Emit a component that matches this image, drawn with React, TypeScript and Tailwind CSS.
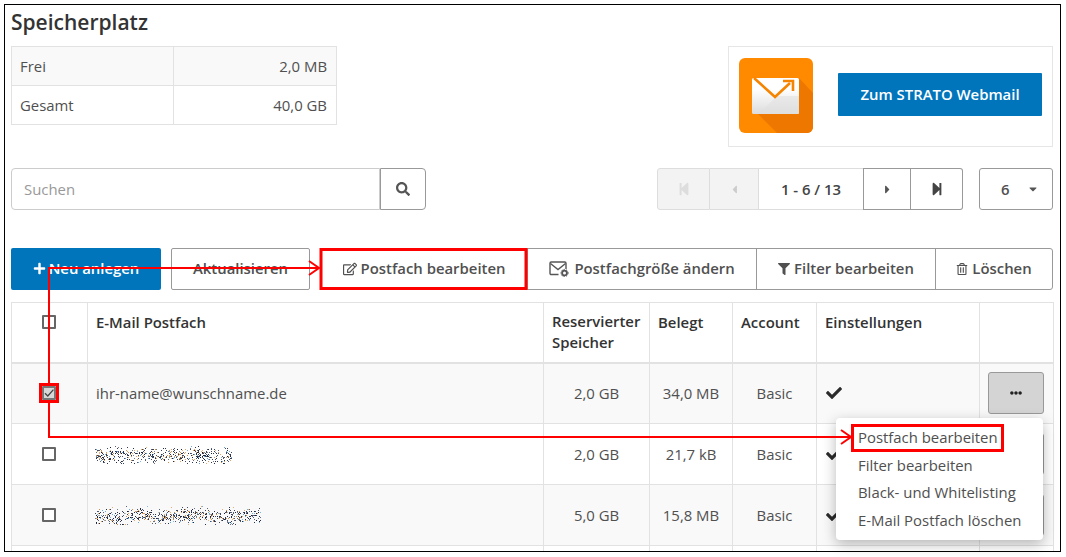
import React from "react";
import { FaSearch, FaRegEdit, FaFilter, FaRegTrashAlt, FaPlus, FaCheck, FaStepBackward, FaStepForward, FaCaretLeft, FaCaretRight, FaCaretDown, FaEllipsisH } from "react-icons/fa";

function Noise({ width, height, seed }: { width: number; height: number; seed: number }) {
  let s = seed;
  const rnd = () => {
    s = (s * 1664525 + 1013904223) % 4294967296;
    return s / 4294967296;
  };
  const colors = ["#141c36", "#1f2740", "#2a3a60", "#141c36", "#d08a3e", "#5fa3d8", "#555b66", "#1f2740", "#e2a25e", "#141c36"];
  const dots: React.ReactNode[] = [];
  const count = Math.round(width * 4.2);
  for (let i = 0; i < count; i++) {
    const x = rnd() * width;
    const spread = (rnd() + rnd() + rnd()) / 3;
    const y = height / 2 + 1 + (spread - 0.5) * height * 1.2 + Math.sin(x / 9) * 1;
    dots.push(<rect key={i} x={Math.round(x)} y={Math.round(y)} width={1} height={1} fill={colors[Math.floor(rnd() * colors.length)]} opacity={0.75 + rnd() * 0.25} />);
  }
  return <svg width={width} height={height} className="-ml-[1px] block">{dots}</svg>;
}

function Check({ checked }: { checked?: boolean }) {
  return (
    <span className={`ml-[30px] flex h-[14px] w-[14px] items-center justify-center rounded-[1px] border-2 ${checked ? "border-[#777] bg-[#d8d8d8]" : "border-[#666] bg-white"}`}>
      {checked && (
        <svg width="10" height="10" viewBox="0 0 10 10"><path d="M1 5.2 L3.8 8 L9.4 1.6" fill="none" stroke="#444" strokeWidth="1.3" /></svg>
      )}
    </span>
  );
}

function MailGear() {
  return (
    <svg width="20" height="16" viewBox="0 0 20 16" className="text-[#555]">
      <path d="M9.5 13.5H2.2a1.2 1.2 0 0 1-1.2-1.2V2.2A1.2 1.2 0 0 1 2.2 1h13.6A1.2 1.2 0 0 1 17 2.2V8" fill="none" stroke="currentColor" strokeWidth="1.4" />
      <path d="M1.5 2.5 9 8.5l7.5-6" fill="none" stroke="currentColor" strokeWidth="1.4" />
      <circle cx="15.5" cy="12" r="2.4" fill="none" stroke="currentColor" strokeWidth="1.8" />
      <circle cx="15.5" cy="12" r="3.6" fill="none" stroke="currentColor" strokeWidth="1" strokeDasharray="1.3 1.3" />
    </svg>
  );
}

function WebmailIcon() {
  return (
    <svg width="74" height="75" viewBox="0 0 74 75" className="block">
      <defs>
        <linearGradient id="env2" x1="0" y1="0" x2="0" y2="1">
          <stop offset="0.3" stopColor="#ffffff" />
          <stop offset="1" stopColor="#dcdcdc" />
        </linearGradient>
      </defs>
      <rect width="74" height="75" rx="6" fill="#ff8a00" />
      <path d="M60 20 L74 35 V69 a6 6 0 0 1-6 6 H38 L17 54 Z" fill="#ee7700" />
      <rect x="13" y="20" width="47" height="36" rx="1.5" fill="url(#env2)" />
      <path d="M20 56 L38 38 L60 38 V56 Z" fill="#e0e0e0" opacity="0.55" />
      <path d="M15 20 L36 39 L51 25" fill="none" stroke="#f58400" strokeWidth="2.6" />
      <path d="M44 23 H54 V33" fill="none" stroke="#f58400" strokeWidth="2.6" />
    </svg>
  );
}

const pageBtn = "flex items-center justify-center h-full";

function Row({ email, mem, used, bg, action, noise, clipped }: { email?: string; mem?: string; used?: string; bg?: string; action?: boolean; noise?: React.ReactNode; clipped?: boolean }) {
  const cell = "border border-[#e2e2e2] align-middle";
  if (clipped) {
    return (
      <tr className="h-[61px] bg-white">
        {[0, 1, 2, 3, 4, 5, 6].map((i) => <td key={i} className={cell}></td>)}
      </tr>
    );
  }
  return (
    <tr className={`h-[61px] ${bg ?? "bg-white"}`}>
      <td className={cell}><Check checked={action} /></td>
      <td className={`${cell} px-[8px]`}>{email ?? noise}</td>
      <td className={`${cell} text-center`}>{mem}</td>
      <td className={`${cell} text-center`}>{used}</td>
      <td className={`${cell} text-center`}>Basic</td>
      <td className={`${cell} px-[9px]`}><FaCheck className="text-[16px] text-[#2b2b2b]" /></td>
      <td className={`${cell} px-[8px]`}>
        <span className={`flex h-[42px] w-[56px] items-center justify-center rounded-[3px] border border-[#999] ${action ? "bg-[#d4d4d4]" : "bg-white"}`}>
          <FaEllipsisH className="text-[12px] text-[#222]" />
        </span>
      </td>
    </tr>
  );
}

export default function App() {
  const th = "border border-[#e2e2e2] border-b-2 align-top pt-[8px] px-[8px] text-left font-semibold text-[#333]";
  const tool = "flex h-full items-center justify-center gap-[4px] border-r border-[#999] pb-[1px] last:border-r-0";
  return (
    <div className="relative h-[557px] w-[1066px] overflow-hidden bg-white font-['Open_Sans',sans-serif] text-[14.9px] text-[#505050]">
      <div className="ml-[4px] mt-[4px] h-[548px] w-[1057px] overflow-hidden border border-black pl-[6px] pr-[7px]">
        <h2 className="flex h-[41px] items-start pt-[2px] text-[21px] font-semibold leading-[30px] text-[#333]">Speicherplatz</h2>
        <div className="flex items-start justify-between">
          <div className="grid h-[79px] w-[326px] grid-cols-[162px_1fr] grid-rows-2 border border-[#e2e2e2]">
            <div className="flex items-center border-b border-r border-[#e2e2e2] bg-[#f9f9f9] pl-[8px]">Frei</div>
            <div className="flex items-center justify-end border-b border-[#e2e2e2] bg-[#f9f9f9] pr-[9px]">2,0 MB</div>
            <div className="flex items-center border-r border-[#e2e2e2] pl-[8px]">Gesamt</div>
            <div className="flex items-center justify-end pr-[9px]">40,0 GB</div>
          </div>
          <div className="flex h-[101px] w-[325px] items-start border border-[#e6e6e6] pl-[10px] pt-[11px]">
            <WebmailIcon />
            <button className="ml-[25px] mt-[15px] h-[43px] w-[204px] rounded-[1px] bg-[#0075bc] font-semibold text-white">Zum STRATO Webmail</button>
          </div>
        </div>
        <div className="mt-[21px] flex h-[42px] items-stretch">
          <input placeholder="Suchen" className="h-full w-[369px] rounded-l-[4px] border border-[#ccc] pl-[12px] outline-none placeholder:text-[#999]" />
          <span className="flex h-full w-[46px] items-center justify-center rounded-r-[4px] border border-l border-[#999]"><FaSearch className="text-[14px] text-[#555]" /></span>
          <div className="ml-[231px] flex h-full w-[306px]">
            <span className={`${pageBtn} w-[53px] rounded-l-[3px] border border-[#ddd] bg-[#f3f3f3]`}><FaStepBackward className="text-[14px] text-[#ddd]" /></span>
            <span className={`${pageBtn} w-[49px] border-y border-r border-[#ddd] bg-[#f3f3f3]`}><FaCaretLeft className="text-[13px] text-[#ccc]" /></span>
            <span className={`${pageBtn} w-[104px] border-y border-[#ddd] font-semibold text-[#444]`}>1 - 6 / 13</span>
            <span className={`${pageBtn} w-[48px] border border-[#999]`}><FaCaretRight className="text-[13px] text-[#555]" /></span>
            <span className={`${pageBtn} w-[52px] rounded-r-[3px] border-y border-r border-[#999]`}><FaStepForward className="text-[14px] text-[#444]" /></span>
          </div>
          <div className="ml-[16px] flex h-full w-[74px] items-center rounded-[3px] border border-[#999] pl-[21px] font-semibold">
            <span>6</span>
            <FaCaretDown className="ml-[17px] text-[12px] text-[#555]" />
          </div>
        </div>
        <div className="mt-[38px] flex h-[42px] font-semibold">
          <button className="flex h-full w-[150px] items-center justify-center gap-[3px] rounded-[2px] bg-[#0075bc] pb-[1px] text-white"><FaPlus className="text-[13px]" />Neu anlegen</button>
          <button className="ml-[10px] h-full w-[139px] rounded-[2px] border border-[#999] pb-[1px]">Aktualisieren</button>
          <div className="ml-[10px] flex h-full w-[733px] rounded-[3px] border border-[#999]">
            <span className={`${tool} w-[207px]`}><FaRegEdit className="text-[14px]" />Postfach bearbeiten</span>
            <span className={`${tool} w-[229px] gap-[5px]`}><MailGear />Postfachgröße ändern</span>
            <span className={`${tool} w-[179px]`}><FaFilter className="text-[12px]" />Filter bearbeiten</span>
            <span className={`${tool} flex-1`}><FaRegTrashAlt className="text-[12px]" />Löschen</span>
          </div>
        </div>
        <table className="mt-[12px] w-[1042px] table-fixed border-collapse">
          <colgroup>
            <col className="w-[76px]" /><col className="w-[456px]" /><col className="w-[106px]" /><col className="w-[83px]" /><col className="w-[84px]" /><col className="w-[163px]" /><col className="w-[74px]" />
          </colgroup>
          <thead>
            <tr className="h-[60px]">
              <th className={`${th} !px-0 !pt-[12px]`}><Check /></th>
              <th className={th}>E-Mail Postfach</th>
              <th className={`${th} leading-[21px]`}>Reservierter Speicher</th>
              <th className={th}>Belegt</th>
              <th className={th}>Account</th>
              <th className={th}>Einstellungen</th>
              <th className={th}></th>
            </tr>
          </thead>
          <tbody>
            <Row email="ihr-name@wunschname.de" mem="2,0 GB" used="34,0 MB" bg="bg-[#f9f9f9]" action />
            <Row mem="2,0 GB" used="21,7 kB" noise={<Noise width={137} height={20} seed={17} />} />
            <Row mem="5,0 GB" used="15,8 MB" bg="bg-[#f9f9f9]" noise={<Noise width={166} height={20} seed={91} />} />
            <Row clipped />
          </tbody>
        </table>
      </div>

      <div className="absolute left-[836px] top-[418px] flex h-[122px] w-[207px] flex-col justify-center rounded-[4px] bg-white pl-[22px] leading-[27.5px] shadow-[0_4px_14px_rgba(0,0,0,0.28)]">
        <span>Postfach bearbeiten</span>
        <span>Filter bearbeiten</span>
        <span>Black- und Whitelisting</span>
        <span>E-Mail Postfach löschen</span>
      </div>

      <svg width="1066" height="557" className="pointer-events-none absolute left-0 top-0">
        <g fill="none" stroke="#ff0000">
          <rect x="321" y="249.5" width="205" height="39" strokeWidth="3" />
          <rect x="40.5" y="384.5" width="17" height="17" strokeWidth="3" />
          <rect x="852.5" y="425.5" width="150" height="25" strokeWidth="3" />
          <path d="M49 383 V268 H318 M49 403 V437 H850" strokeWidth="2" />
          <path d="M309 261 L319 268 L309 275" strokeWidth="2" />
          <path d="M841 430 L851 437 L841 444" strokeWidth="2" />
        </g>
      </svg>
    </div>
  );
}
